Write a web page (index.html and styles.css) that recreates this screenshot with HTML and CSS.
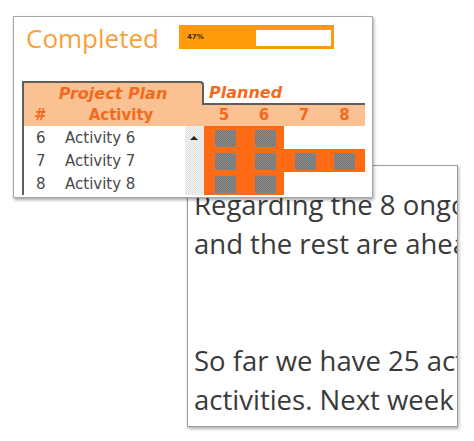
FILE: index.html
```html
<!DOCTYPE html>
<html lang="en">
<head>
<meta charset="utf-8">
<title>Project status</title>
<link rel="stylesheet" href="styles.css">
</head>
<body>
<div class="desk">
  <section class="note">
    <p class="line">Regarding the 8 ongoing activities, 5 are on schedule</p>
    <p class="line">and the rest are ahead of schedule.</p>
    <p class="line gap">So far we have 25 activities completed out of 40</p>
    <p class="line">activities. Next week we start 3 more.</p>
  </section>

  <section class="plan">
    <header class="plan-top">
      <h1 class="title">Completed</h1>
      <div class="bar"><span class="bar-label">47%</span><span class="bar-rest"></span></div>
    </header>
    <div class="grid">
      <div class="tab">Project Plan</div>
      <div class="planned">Planned</div>

      <div class="hd">#</div>
      <div class="hd">Activity</div>
      <div class="hd"></div>
      <div class="hd">5</div>
      <div class="hd">6</div>
      <div class="hd">7</div>
      <div class="hd">8</div>

      <div class="scroll r1"><span class="arrow"></span></div>

      <div class="num r1">6</div>
      <div class="act r1">Activity 6</div>
      <div class="cell on c4 r1"><span class="sq"></span></div>
      <div class="cell on c5 r1"><span class="sq"></span></div>
      <div class="cell c6 r1"></div>
      <div class="cell c7 r1"></div>

      <div class="num r2">7</div>
      <div class="act r2">Activity 7</div>
      <div class="cell on c4 r2"><span class="sq"></span></div>
      <div class="cell on c5 r2"><span class="sq"></span></div>
      <div class="cell on c6 r2"><span class="sq"></span></div>
      <div class="cell on c7 r2 last"><span class="sq"></span></div>

      <div class="num r3">8</div>
      <div class="act r3">Activity 8</div>
      <div class="cell on c4 r3"><span class="sq"></span></div>
      <div class="cell on c5 r3"><span class="sq"></span></div>
      <div class="cell c6 r3"></div>
      <div class="cell c7 r3"></div>
    </div>
  </section>
</div>
</body>
</html>
```

FILE: styles.css
```css
html, body {
  margin: 0;
  padding: 0;
  background: #ffffff;
}

.desk {
  position: relative;
  width: 474px;
  height: 441px;
  overflow: hidden;
}

/* ---------- lower window: text note ---------- */
.note {
  position: absolute;
  left: 187px;
  top: 165px;
  width: 271px;
  height: 262px;
  box-sizing: border-box;
  border: 1px solid #9c9c9c;
  box-shadow: 1px 2px 3px rgba(0, 0, 0, 0.3);
  background: #ffffff;
  overflow: hidden;
  padding: 19px 0 0 6px;
  font-family: "Open Sans", "Liberation Sans", sans-serif;
  font-size: 27.5px;
  line-height: 39px;
  color: #3a3a3a;
  white-space: nowrap;
}

.line {
  margin: 0;
}

.line.gap {
  margin-top: 78px;
}

/* ---------- upper window: project plan ---------- */
.plan {
  position: absolute;
  left: 13px;
  top: 16px;
  width: 360px;
  height: 182px;
  box-sizing: border-box;
  border: 1px solid #a8a8a8;
  box-shadow: 1px 2px 3px rgba(0, 0, 0, 0.35);
  background: #ffffff;
  overflow: hidden;
  z-index: 2;
}

.plan-top {
  display: flex;
  align-items: flex-start;
  height: 64px;
  box-sizing: border-box;
  padding: 6px 0 0 12px;
}

.title {
  margin: 0;
  width: 153px;
  font-family: "Open Sans", "Liberation Sans", sans-serif;
  font-weight: 400;
  font-size: 26px;
  line-height: 30px;
  color: #f8a03a;
}

.bar {
  display: flex;
  width: 155px;
  height: 24px;
  margin-top: 2px;
  box-sizing: border-box;
  padding: 5px 3px 3px 0;
  background: #ff9a0a;
}

.bar-label {
  width: 77px;
  box-sizing: border-box;
  padding-left: 8px;
  font-family: "DejaVu Sans", sans-serif;
  font-weight: 700;
  font-size: 7px;
  line-height: 15px;
  color: #3a2a10;
}

.bar-rest {
  flex: 1;
  background: #ffffff;
}

.grid {
  display: grid;
  grid-template-columns: 33px 128px 19px 40px 40px 40px 41px;
  grid-template-rows: 24px 21px 23px 23px 23px;
  width: 343px;
  margin-left: 8px;
  border-left: 2px solid #5e5e5e;
  font-family: "DejaVu Sans", "Liberation Sans", sans-serif;
}

.tab {
  grid-column: 1 / 4;
  background: #fac292;
  border-top: 2px solid #5e5e5e;
  border-right: 2px solid #5e5e5e;
  border-top-right-radius: 4px;
  font-weight: 700;
  font-style: italic;
  font-size: 16px;
  line-height: 22px;
  text-align: center;
  color: #f26a1e;
}

.planned {
  grid-column: 4 / 8;
  border-bottom: 2px solid #5e5e5e;
  padding-left: 5px;
  font-weight: 700;
  font-style: italic;
  font-size: 16px;
  line-height: 24px;
  color: #f26a1e;
}

.hd {
  background: #fac292;
  font-weight: 700;
  font-size: 15px;
  line-height: 21px;
  text-align: center;
  color: #f26a1e;
}

.r1 { grid-row: 3; }
.r2 { grid-row: 4; }
.r3 { grid-row: 5; }

.num {
  grid-column: 1;
  padding-left: 12px;
  font-size: 15px;
  line-height: 24px;
  color: #4a4a4a;
}

.act {
  grid-column: 2;
  padding-left: 8px;
  font-size: 15px;
  line-height: 24px;
  color: #4a4a4a;
}

.scroll {
  grid-column: 3;
  grid-row: 3 / 6;
  position: relative;
  background-color: #ebebeb;
  background-image: repeating-conic-gradient(#e2e2e2 0 25%, #f3f3f3 0 50%);
  background-size: 2px 2px;
}

.arrow {
  position: absolute;
  left: 5px;
  top: 10px;
  width: 0;
  height: 0;
  border-left: 4px solid transparent;
  border-right: 4px solid transparent;
  border-bottom: 4px solid #222222;
}

.c4 { grid-column: 4; }
.c5 { grid-column: 5; }
.c6 { grid-column: 6; }
.c7 { grid-column: 7; }

.cell {
  display: flex;
  align-items: flex-end;
  box-sizing: border-box;
  padding: 0 0 2px 11px;
}

.cell.last {
  padding-left: 10px;
}

.cell.on {
  background: #ff6a14;
}

.sq {
  display: block;
  width: 21px;
  height: 17px;
  background-color: #808080;
  background-image: repeating-conic-gradient(#777777 0 25%, #8a8a8a 0 50%);
  background-size: 2px 2px;
}
```
